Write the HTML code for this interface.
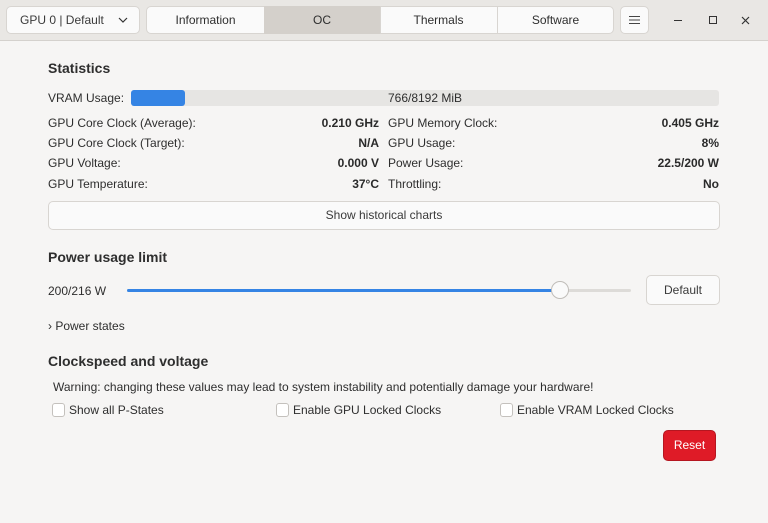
<!DOCTYPE html>
<html><head><meta charset="utf-8"><style>
*{box-sizing:border-box;margin:0;padding:0}
body{width:768px;height:523px;background:#f6f5f4;font-family:"Liberation Sans",sans-serif;font-size:12px;color:#2e2e2e;position:relative;overflow:hidden}
.a{position:absolute;white-space:nowrap}
.hdr{position:absolute;left:0;top:0;width:768px;height:41px;background:#e9e7e4;border-bottom:1px solid #d4d1cd}
.btn{position:absolute;background:#fafafa;border:1px solid #d8d5d1;border-radius:5px;text-align:center;color:#3a3a3a}
.b{font-weight:bold;color:#2a2a2a}
.h{font-size:14px;font-weight:bold;color:#2e2e2e}
.cb{position:absolute;width:13px;height:14px;border:1px solid #c4c1bd;border-radius:3px;background:#fff}
</style></head><body>
<div class="hdr"></div>
<div class="btn" style="left:6px;top:6px;width:134px;height:28px;line-height:26px;text-align:left;padding-left:13px">GPU 0 | Default</div>
<svg class="a" style="left:118px;top:17px" width="10" height="6"><path d="M1 1 L5 5 L9 1" fill="none" stroke="#333" stroke-width="1.2"/></svg>
<div class="btn" style="left:146px;top:6px;width:468px;height:28px;"></div>
<div class="a" style="left:264px;top:6px;width:116px;height:28px;background:#d4d0cb"></div>
<div class="a" style="left:380px;top:7px;width:1px;height:26px;background:#d8d5d1"></div>
<div class="a" style="left:497px;top:7px;width:1px;height:26px;background:#d8d5d1"></div>
<div class="a" style="left:147px;top:13px;width:117px;text-align:center">Information</div>
<div class="a" style="left:264px;top:13px;width:116px;text-align:center">OC</div>
<div class="a" style="left:380px;top:13px;width:117px;text-align:center">Thermals</div>
<div class="a" style="left:497px;top:13px;width:117px;text-align:center">Software</div>
<div class="btn" style="left:620px;top:6px;width:29px;height:28px;"></div>
<svg class="a" style="left:629px;top:15px" width="11" height="10"><path d="M0 1.5H11M0 5H11M0 8.5H11" stroke="#444" stroke-width="1"/></svg>
<div class="a" style="left:674px;top:20px;width:8px;height:1px;background:#333"></div>
<div class="a" style="left:709px;top:16px;width:8px;height:8px;border:1px solid #333"></div>
<svg class="a" style="left:741px;top:16px" width="9" height="9"><path d="M1 1L8 8M8 1L1 8" stroke="#333" stroke-width="1.2"/></svg>

<div class="a h" style="left:48px;top:60px">Statistics</div>
<div class="a" style="left:48px;top:91px">VRAM Usage:</div>
<div class="a" style="left:131px;top:90px;width:588px;height:16px;background:#e6e5e3;border-radius:3px"></div>
<div class="a" style="left:131px;top:90px;width:54px;height:16px;background:#3584e4;border-radius:3px"></div>
<div class="a" style="left:131px;top:91px;width:588px;text-align:center">766/8192 MiB</div>

<div class="a" style="left:48px;top:116px">GPU Core Clock (Average):</div>
<div class="a" style="left:48px;top:136px">GPU Core Clock (Target):</div>
<div class="a" style="left:48px;top:156px">GPU Voltage:</div>
<div class="a" style="left:48px;top:177px">GPU Temperature:</div>
<div class="a b" style="right:389px;top:116px">0.210 GHz</div>
<div class="a b" style="right:389px;top:136px">N/A</div>
<div class="a b" style="right:389px;top:156px">0.000 V</div>
<div class="a b" style="right:389px;top:177px">37°C</div>
<div class="a" style="left:388px;top:116px">GPU Memory Clock:</div>
<div class="a" style="left:388px;top:136px">GPU Usage:</div>
<div class="a" style="left:388px;top:156px">Power Usage:</div>
<div class="a" style="left:388px;top:177px">Throttling:</div>
<div class="a b" style="right:49px;top:116px">0.405 GHz</div>
<div class="a b" style="right:49px;top:136px">8%</div>
<div class="a b" style="right:49px;top:156px">22.5/200 W</div>
<div class="a b" style="right:49px;top:177px">No</div>
<div class="btn" style="left:48px;top:201px;width:672px;height:29px;line-height:27px">Show historical charts</div>

<div class="a h" style="left:48px;top:249px">Power usage limit</div>
<div class="a" style="left:48px;top:284px">200/216 W</div>
<div class="a" style="left:127px;top:289px;width:504px;height:3px;background:#dddbd8;border-radius:2px"></div>
<div class="a" style="left:127px;top:289px;width:433px;height:3px;background:#3584e4;border-radius:2px"></div>
<div class="a" style="left:551px;top:281px;width:18px;height:18px;border-radius:50%;background:#fafafa;border:1px solid #c0bdb9"></div>
<div class="btn" style="left:646px;top:275px;width:74px;height:30px;line-height:28px">Default</div>

<div class="a" style="left:48px;top:319px">› Power states</div>
<div class="a h" style="left:48px;top:353px">Clockspeed and voltage</div>
<div class="a" style="left:53px;top:380px">Warning: changing these values may lead to system instability and potentially damage your hardware!</div>
<div class="cb" style="left:52px;top:403px"></div><div class="a" style="left:69px;top:403px">Show all P-States</div>
<div class="cb" style="left:276px;top:403px"></div><div class="a" style="left:293px;top:403px">Enable GPU Locked Clocks</div>
<div class="cb" style="left:500px;top:403px"></div><div class="a" style="left:517px;top:403px">Enable VRAM Locked Clocks</div>
<div class="a" style="left:663px;top:430px;width:53px;height:31px;background:#df1b27;border:1px solid #b51620;border-radius:5px;color:#fff;text-align:center;line-height:29px">Reset</div>
</body></html>
